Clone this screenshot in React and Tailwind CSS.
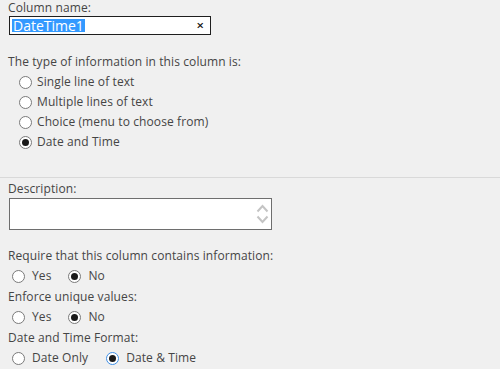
function Radio({ checked, focused }) {
    return (
        <span
            className={
                "inline-flex items-center justify-center w-[13px] h-[13px] rounded-full bg-white border " +
                (focused ? "border-[#3d8ee6] border-[1.5px]" : "border-[#7a7a7a]")
            }
        >
            {checked && <span className="w-[7px] h-[7px] rounded-full bg-[#1a1a1a]" />}
        </span>
    );
}

function Option({ label, checked, focused, gap = "gap-[5px]" }) {
    return (
        <div className={"flex items-center h-[20px] " + gap}>
            <Radio checked={checked} focused={focused} />
            <span>{label}</span>
        </div>
    );
}

export default function App() {
    const types = [
        "Single line of text",
        "Multiple lines of text",
        "Choice (menu to choose from)",
        "Date and Time",
    ];

    return (
        <div
            className="w-[500px] h-[369px] overflow-hidden bg-[#f0f0f0] text-[#454545] text-[12px] tracking-[0.1px]"
            style={{ fontFamily: '"Open Sans", "Noto Sans", sans-serif' }}
        >
            {/* Name and type */}
            <div className="pl-[8px]">
                <div className="h-[16px] leading-[16px]">Column name:</div>
                <div className="ml-[1px] w-[202px] h-[19px] border border-[#1e1e1e] bg-white flex items-center justify-between pl-[2px] pr-[6px]">
                    <span className="bg-[#3399ff] text-white text-[14px] tracking-normal leading-[13px] h-[13px] px-px">DateTime1</span>
                    <span className="text-[#111] text-[13px] leading-none font-semibold">×</span>
                </div>
                <div className="mt-[17px] h-[20px] leading-[20px]">
                    The type of information in this column is:
                </div>
                <div className="pl-[11px]">
                    {types.map((t, i) => (
                        <Option key={t} label={t} checked={i === 3} />
                    ))}
                </div>
            </div>

            <div className="mt-[25px] h-px bg-[#d9d9d9]" />

            {/* Description and settings */}
            <div className="pl-[8px]">
                <div className="mt-[3px] h-[16px] leading-[16px]">Description:</div>
                <div className="mt-[1px] ml-[1px] w-[263px] h-[32px] border border-[#6e6e6e] bg-white flex justify-end">
                    <div className="w-[17px] flex flex-col items-center justify-center gap-[2px] text-[#c4c4c4]">
                        <svg width="13" height="9" viewBox="0 0 13 9">
                            <path d="M1.5 7.5 L6.5 2 L11.5 7.5" fill="none" stroke="currentColor" strokeWidth="2" />
                        </svg>
                        <svg width="13" height="9" viewBox="0 0 13 9">
                            <path d="M1.5 1.5 L6.5 7 L11.5 1.5" fill="none" stroke="currentColor" strokeWidth="2" />
                        </svg>
                    </div>
                </div>

                <div className="mt-[16px] h-[20px] leading-[20px]">
                    Require that this column contains information:
                </div>
                <div className="flex items-center pl-[4px] gap-[17px]">
                    <Option label="Yes" gap="gap-[7px]" />
                    <Option label="No" checked gap="gap-[7px]" />
                </div>

                <div className="mt-px h-[20px] leading-[20px]">Enforce unique values:</div>
                <div className="flex items-center pl-[4px] gap-[17px]">
                    <Option label="Yes" gap="gap-[7px]" />
                    <Option label="No" checked gap="gap-[7px]" />
                </div>

                <div className="mt-px h-[20px] leading-[20px]">Date and Time Format:</div>
                <div className="flex items-center pl-[4px] gap-[18px]">
                    <Option label="Date Only" gap="gap-[7px]" />
                    <Option label="Date & Time" checked focused gap="gap-[7px]" />
                </div>
            </div>
        </div>
    );
}
